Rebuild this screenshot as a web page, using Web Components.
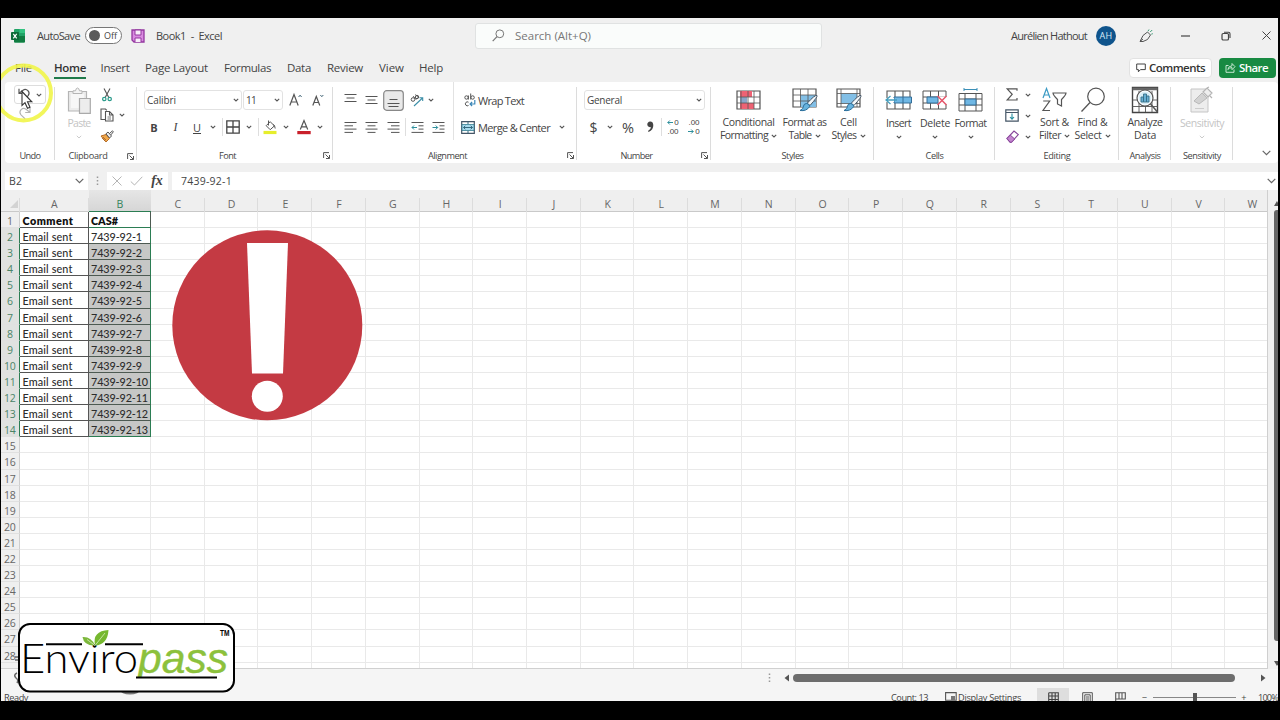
<!DOCTYPE html>
<html lang="en">
<head>
<meta charset="utf-8">
<title>Book1 - Excel</title>
<style>
html, body { margin: 0; height: 100%; background: #000; overflow: hidden; }
body { font-family: "Open Sans", "Noto Sans", sans-serif; font-size: 11px; color: #444; }
</style>
</head>
<body>
<xl-window>
    <xl-titlebar></xl-titlebar>
    <xl-tabs></xl-tabs>
    <xl-ribbon></xl-ribbon>
    <xl-formula></xl-formula>
    <xl-sheet></xl-sheet>
    <xl-footer></xl-footer>
</xl-window>
<alert-mark></alert-mark>
<brand-badge></brand-badge>
<click-ring></click-ring>

<script>
const ICONS = {
    chev: [6, 4, `<path d="M.8.8 3 3 5.2.8" fill="none" stroke="#555" stroke-width="1.1"/>`],
    bigchev: [9, 6, `<path d="M.7.9 4.5 4.7 8.3.9" fill="none" stroke="#666" stroke-width="1.2"/>`],
    palechev: [6, 4, `<path d="M.8.8 3 3 5.2.8" fill="none" stroke="#ccc"/>`],
    sep: [1, 18, `<path d="M.5 0v18" stroke="#dedede"/>`],
    excel: [14, 14, `<rect x="3" width="11" height="13.500" rx="1" fill="#21a366"/><path d="M8.500 0H13a1 1 0 0 1 1 1v3H8.500z" fill="#33c481"/><path d="M3 7h11v5.500a1 1 0 0 1-1 1H4a1 1 0 0 1-1-1z" fill="#107c41"/><rect y="3" width="8" height="8" rx=".8" fill="#0c6b38"/><path d="m2.300 4.800 3.400 4.500m0-4.500L2.300 9.300" stroke="#fff" stroke-width="1.200"/>`],
    save: [14, 14, `<path d="M1 1h12v12H3l-2-2z" fill="#d98ae0" stroke="#93379f" stroke-width="1.300"/><path d="M4 1h6v5H4z" fill="#f8edf9" stroke="#93379f"/><path d="M4 13V9h6v4" fill="#f8edf9" stroke="#93379f"/>`],
    search: [13, 13, `<circle cx="7.800" cy="4.800" r="3.900" fill="none" stroke="#777"/><path d="m5 7.600-4.300 4.600" stroke="#777" stroke-width="1.200"/>`],
    pen: [14, 14, `<path d="M1 12.500 4 6.500 8.500 3l3 3-3 4.500-4.500 2zL4 10M1 12.500l3 0" fill="none" stroke="#555"/><path d="m9 2.200 1-1.700M11.200 3l2-2M12.300 5.200l1.500-.5" stroke="#3a9c76"/>`],
    min: [9, 2, `<path d="M0 1h9" stroke="#444" stroke-width="1.200"/>`],
    max: [10, 10, `<rect x="1" y="2.500" width="6.500" height="6.500" rx="1.300" fill="none" stroke="#444" stroke-width="1.200"/><path d="M3 1.200h4.500q1.500 0 1.500 1.500V7" fill="none" stroke="#444" stroke-width="1.100"/>`],
    close: [9, 9, `<path d="m.5.5 8 8m0-8-8 8" stroke="#444"/>`],
    comment: [10, 10, `<path d="M.7 1h8.600v5.600H4.500L2.400 8.800V6.600H.7z" fill="none" stroke="#444"/>`],
    share: [11, 11, `<path d="M3.500 3.500H1v6.800h8V7.500M2.800 7.500q.5-3.500 4.200-3.700V1.500l3 3.200-3 3V5.600q-2.700 0-4.200 1.900" fill="none" stroke="#d7f0df" stroke-width=".9"/>`],
    undo: [13, 13, `<path d="M1 .8v4.700h4.800M1.200 5.300 5 2.200a3.800 3.800 0 0 1 5.200 5.400L5.800 12" fill="none" stroke="#555" stroke-width="1.200"/>`],
    redo: [13, 13, `<path d="M12 .8v4.700H7.200M11.800 5.300 8 2.200a3.800 3.800 0 0 0-5.200 5.400L7.200 12" fill="none" stroke="#b2b2b2" stroke-width="1.100"/>`],
    paste: [24, 27, `<path d="M1.500 4.500h18V24h-18z" fill="#ececec" stroke="#b5b5b5" stroke-width="1.200"/><path d="M4 7h13v14H4z" fill="#f7f7f7"/><path d="M6 6.500V3.800h2.500Q9 1 10.500 1t2 2.800H15v2.700z" fill="#f4f4f4" stroke="#b5b5b5"/><path d="M12.500 11.500h10.800v14.800H12.500z" fill="#ededed" stroke="#aaa" stroke-width="1.200"/>`],
    cut: [10, 14, `<path d="m2 .5 4.800 9M8 .5 3.200 9.500" stroke="#555" stroke-width="1.100"/><circle cx="2.300" cy="11" r="1.700" fill="none" stroke="#2b9b8b" stroke-width="1.200"/><circle cx="7.700" cy="11" r="1.700" fill="none" stroke="#2b9b8b" stroke-width="1.200"/>`],
    copy: [14, 14, `<path d="M5 11.500H1V1h4.500l1.300 1.300" fill="none" stroke="#555" stroke-width="1.100"/><path d="M5.500 3.500h4l3.500 3.500v6H5.500zM9.500 3.500V7H13" fill="#fff" stroke="#555" stroke-width="1.100"/><path d="M7.500 9h3.500M7.500 11h3.500" stroke="#555" stroke-width=".8"/>`],
    brush: [14, 13, `<path d="m1 6 5-1.500 3.500 4L6 12z" fill="#f0a94c" stroke="#b76c25"/><path d="M6 3.800 8 2l3.500 4-2 2z" fill="#eee" stroke="#555"/><path d="M9.500 3.500 12.500.8l.8 1L11 4.800" fill="none" stroke="#555"/><path d="m3 7 3 3M2 8l3 3" stroke="#9b571c" stroke-width=".7"/>`],
    launch: [7, 7, `<path d="M.6 6V.6H6M6.500 3v3.500H3M2.500 2.500l3.800 3.800" fill="none" stroke="#555"/>`],
    grow: [13, 14, `<path d="m.8 12.500 4.200-11 4.200 11M2.200 9h5.600" fill="none" stroke="#555" stroke-width="1.200"/><path d="m9.600 4 1.500-1.800L12.600 4" fill="none" stroke="#467"/>`],
    shrink: [12, 14, `<path d="m.8 12.500 3.500-9 3.500 9M2 9.500h4.700" fill="none" stroke="#555" stroke-width="1.200"/><path d="m8.400 2 1.400 1.700L11.300 2" fill="none" stroke="#467"/>`],
    borders: [14, 14, `<path d="M.8.800h12.400v12.400H.8zM7 1v12M1 7h12" fill="none" stroke="#444" stroke-width="1.300"/>`],
    fill: [14, 15, `<path d="m3.200 5.700 4-4 4.200 4.200-4.200 3.800z" fill="#fff" stroke="#555"/><path d="M5.500.5v5M10 4.500q2 .5 2.200 4" fill="none" stroke="#555"/><path d="M.5 12.500h13" stroke="#e6ee2c" stroke-width="3.200"/>`],
    fontcol: [14, 15, `<path d="m3.300 9.500 3.700-9 3.700 9M4.500 6.800h5" fill="none" stroke="#555" stroke-width="1.200"/><path d="M.3 12.600h13.400" stroke="#c9202b" stroke-width="3.200"/>`],
    atop: [13, 14, `<path d="M.5 1.500h12M2.500 5h8M.5 8.500h12" stroke="#555"/>`],
    amid: [13, 14, `<path d="M.5 3.500h12M2.500 7h8M.5 10.500h12" stroke="#555"/>`],
    abot: [21, 21, `<rect x=".7" y=".7" width="19.600" height="19.600" rx="3" fill="#e9e9e9" stroke="#888" stroke-width="1.200"/><path d="M6.500 9.500h8M4.500 13.500h12M5.500 16.500h10" stroke="#555"/>`],
    left: [13, 13, `<path d="M.5 1.500h12M.5 4.800h8.500M.5 8.100h12M.5 11.400h8.500" stroke="#555"/>`],
    center: [13, 13, `<path d="M.5 1.500h12M2.500 4.800h8M.5 8.100h12M2.500 11.400h8" stroke="#555"/>`],
    right: [13, 13, `<path d="M.5 1.500h12M4 4.800h8.500M.5 8.100h12M4 11.400h8.500" stroke="#555"/>`],
    outdent: [13, 13, `<path d="M.5 1.500h12M7.500 4.800h5M7.500 8.100h5M.5 11.400h12" stroke="#555"/><path d="M6 6.500H1M3 4.500l-2 2 2 2" fill="none" stroke="#2e8f9c"/>`],
    indent: [13, 13, `<path d="M.5 1.500h12M7.500 4.800h5M7.500 8.100h5M.5 11.400h12" stroke="#555"/><path d="M.5 6.500h5.200m-2-2 2 2-2 2" fill="none" stroke="#2e8f9c"/>`],
    orient: [14, 13, `<g fill="none" stroke="#555"><circle cx="3" cy="5.500" r="1.800"/><path d="m3.200 2.200 3 3.500"/><circle cx="7" cy="3" r="1.700"/><path d="M5.500.5 8.500 4"/></g><path d="M4 12 12.500 4M9.500 3.700h3.200v3.200" fill="none" stroke="#3d8fa8" stroke-width="1.100"/>`],
    wrap: [12, 14, `<g fill="none" stroke="#555"><circle cx="2.500" cy="4.500" r="1.700"/><path d="M4.400 2.500v4M6.700.5v6"/><circle cx="8.600" cy="4.500" r="1.700"/><path d="M4.500 9.200a2 2 0 1 0 0 3.300"/></g><path d="M10.800 7v4H6.300m1.800-2-2 2 2 2" fill="none" stroke="#3b87b8" stroke-width="1.200"/>`],
    merge: [14, 13, `<path d="M.7.7h12.600v11.600H.7z" fill="#fff" stroke="#456" stroke-width="1.200"/><path d="M1 3.500h12v6H1z" fill="#a7daed" stroke="#357d92" stroke-width=".8"/><path d="M7 .7v2.500M7 9.800v2.500M2.500 6.500h9M4.300 4.800 2.500 6.500l1.800 1.700M9.700 4.800l1.800 1.700-1.800 1.700" fill="none" stroke="#34697e"/>`],
    comma: [7, 12, `<path d="M3.300.6a2.800 2.800 0 1 0 .8 5.400Q3.700 8.700 1 9.900l.6 1.100Q6.500 9 6.300 4 6 .6 3.300.6" fill="#444"/>`],
    arrl: [6, 5, `<path d="M6 2.500H.8M2.800.5l-2 2 2 2" fill="none" stroke="#2e8f9c"/>`],
    arrr: [6, 5, `<path d="M0 2.500h5.200M3.200.5l2 2-2 2" fill="none" stroke="#2e8f9c"/>`],
    cond: [25, 20, `<path d="M1 1h23v18H1z" fill="#fff" stroke="#555" stroke-width="1.200"/><path d="M4 1h12v6H4zM4 13h14v6H4z" fill="#ee6274"/><path d="M4 7h7v6H4z" fill="#8ba5c9"/><path d="M1 7h23M1 13h23M5 1v18M12 1v18M18 1v18" fill="none" stroke="#555" stroke-width=".8"/>`],
    fmttable: [26, 23, `<path d="M1 1h23v18H1z" fill="#fff" stroke="#555" stroke-width="1.200"/><path d="M8.500 7H24v12H8.500z" fill="#82bfe6"/><path d="M1 7h23M1 13h23M8.500 1v18M16 1v18" stroke="#555" stroke-width=".8"/><path d="M25 7.500q1 1-7 10l-3-2Q23 6.500 25 7.500" fill="#f4f7f9" stroke="#456"/><path d="M14.500 15.500q3 0 3.200 3Q14.500 23.500 8 22.500q3.500-1.500 3.500-4.500.500-2.500 3-2.500" fill="#67b3de" stroke="#2b6f9c"/>`],
    cellstyle: [26, 23, `<path d="M1 1h23v18H1z" fill="#fff" stroke="#555" stroke-width="1.200"/><path d="M5 5.500h16v10H5z" fill="#82bfe6"/><path d="M5 1v18M21 1v18M1 5.500h23M1 15.500h23" stroke="#555" stroke-width=".8"/><path d="M25 7.500q1 1-7 10l-3-2Q23 6.500 25 7.500" fill="#f4f7f9" stroke="#456"/><path d="M14.500 15.500q3 0 3.200 3Q14.500 23.500 8 22.500q3.500-1.500 3.500-4.500.500-2.500 3-2.500" fill="#67b3de" stroke="#2b6f9c"/>`],
    insert: [27, 20, `<path d="M2 1h23v18H2zM10 1v18M18 1v18" fill="#fff" stroke="#555" stroke-width="1.100"/><path d="M9 7h17.500v6H9z" fill="#6fb7e4" stroke="#356f99"/><path d="M18 7v6" stroke="#356f99"/><path d="M0 8h9v4H0z" fill="#fff"/><path d="M12 10H1m4.500-4L1 10l4.500 4" fill="none" stroke="#469fbe" stroke-width="1.300"/>`],
    del: [26, 20, `<path d="M1 1h23v18H1zM1 7h23M1 13h23M8.500 1v18M16.500 1v18" fill="#fff" stroke="#555" stroke-width="1"/><path d="M5 7h11v6H5z" fill="#6fb7e4" stroke="#356f99"/><path d="M16.500 6.500h9v8h-9z" fill="#fff"/><path d="m15.500 6 9 9m0-9-9 9" stroke="#e6576b" stroke-width="1.500"/>`],
    format: [25, 24, `<path d="M1 5.500h23V23H1zM1 11h23M1 17h23M7 5.500V23M18 5.500V23" fill="#fff" stroke="#555" stroke-width="1"/><path d="M7 11h11v6H7z" fill="#6fb7e4" stroke="#356f99"/><path d="M6 1.500h13M6 0v3M19 0v3" stroke="#3a8fb7"/>`],
    sum: [12, 13, `<path d="M11 2.800V.8H1.200l5 5.500-5 5.700H11v-2" fill="none" stroke="#555" stroke-width="1.200"/>`],
    filldown: [14, 13, `<path d="M.8.800h12.400v11.400H.8zM1 3.500h12" fill="#fff" stroke="#456" stroke-width="1.200"/><path d="M7 4.500V10m-2-2 2 2.200L9 8" fill="none" stroke="#278fa0" stroke-width="1.100"/>`],
    eraser: [13, 13, `<path d="M1 8.500 8 1l4.300 3.500-6.800 7.700H4z" fill="#fff" stroke="#87459a" stroke-width="1.100"/><path d="m1 8.500 3.300-3.400L8.700 9l-3.200 3.200H4z" fill="#c486cf" stroke="#87459a"/>`],
    sort: [25, 25, `<path d="M1 11 4.500 1.500 8 11M2.200 8h4.600" fill="none" stroke="#3c9bc4" stroke-width="1.200"/><path d="M1.200 14h6.500L1 23.500h7" fill="none" stroke="#555" stroke-width="1.200"/><path d="M11 6h13q0 2-4.500 6.500V19l-4-2v-4.500Q11 8 11 6z" fill="none" stroke="#555" stroke-width="1.200"/>`],
    find: [26, 26, `<circle cx="16" cy="9.500" r="8.300" fill="#fff" stroke="#555" stroke-width="1.200"/><path d="M10 15.500 1.500 24.500" stroke="#555" stroke-width="1.300"/>`],
    analyze: [28, 28, `<path d="M1.500 1.500h25v25h-25z" fill="#fff" stroke="#444" stroke-width="1.400"/><path d="M1.500 3h25" stroke="#666" stroke-width="2.500"/><path d="M1.500 14h25M1.500 20.500h25M8 5v21M14.500 5v21M21 5v21" stroke="#555" stroke-width=".9"/><circle cx="14" cy="12" r="8" fill="#fff" stroke="#555" stroke-width="1.200"/><circle cx="14" cy="12" r="6.500" fill="#d9eef7"/><path d="M10 11h2.500v5H10zM12.500 8h3v8h-3zM15.500 10H18v6h-2.500z" fill="#67afd3" stroke="#356f88" stroke-width=".9"/><path d="m19.500 18 7 8" stroke="#555" stroke-width="1.500"/>`],
    sens: [24, 27, `<path d="M1 2h17v23H1z" fill="#ededed" stroke="#c5c5c5"/><path d="m4 14 8-8 5 5-8 6z" fill="#d2d2d2" stroke="#b9b9b9"/><path d="m13 5 4-4 5 5-4 4zM20 9l2 2M17 1l2-1" fill="#eee" stroke="#b5b5b5" stroke-width="1.200"/><path d="M5 21.500h9" stroke="#ccc"/>`],
    cancel: [10, 10, `<path d="m.5.5 9 9m0-9-9 9" stroke="#b5b5b5"/>`],
    ok: [13, 10, `<path d="M.8 5.500 4.500 9 12.300.8" fill="none" stroke="#b5b5b5"/>`],
    dots: [3, 11, `<path d="M1.500.5v10" stroke="#999" stroke-width="1.500" stroke-dasharray="1.500 2"/>`],
    tril: [5, 8, `<path d="M5 .5v7L.5 4z" fill="#555"/>`],
    trir: [5, 8, `<path d="M0 .5v7L4.500 4z" fill="#555"/>`],
    display: [12, 10, `<path d="M.6.6h10.600v7.600H.6zM2 9.500h4" fill="none" stroke="#555" stroke-width="1.100"/><path d="M6 4h4v4H6z" fill="#777"/>`],
    vnormal: [11, 11, `<path d="M.7.700h9.600V11M.7.700V11M.7 4h9.600M.7 7.500h9.600M4 .7V11M7.200.700V11" fill="none" stroke="#444" stroke-width="1.100"/>`],
    vpage: [11, 11, `<path d="M.7 11V.7h9.600V11M2.800 11V2.800h5.400V11M4 5h3M4 7h3M4 9h3" fill="none" stroke="#555"/>`],
    vbreak: [11, 11, `<path d="M.7 11V.7h9.600V7H.7M4 1v6M7 1v6" fill="none" stroke="#555" stroke-width="1.100"/>`]
};

// every part shares the same set-up: its own style, its markup, an optional fixed width
class Part extends HTMLElement {
    static css = "";
    static html = "<slot></slot>";

    constructor() {
        super();
        this.attachShadow({ mode: "open" });
    }

    connectedCallback() {
        if(this.hasAttribute("w")) {
            this.style.width = `${this.getAttribute("w")}px`;
        }
        this.shadowRoot.innerHTML = `<style>${this.constructor.css}</style>${this.render()}`;
        this.ready();
    }

    render() {
        return this.constructor.html;
    }

    ready() {}
}

class UiIcon extends Part {
    static css = `:host { display: flex; flex: none; align-items: center; justify-content: center; }
        svg { flex: none; display: block; overflow: visible; }`;

    render() {
        const [w, h, body] = ICONS[this.getAttribute("name")];
        return `<svg width="${w}" height="${h}" viewBox="0 0 ${w} ${h}">${body}</svg>`;
    }
}

// text whose tracking is adjusted so that it comes out "fit" pixels wide
class UiText extends Part {
    static css = `:host { display: flex; flex: none; align-items: center; justify-content: center; white-space: nowrap; line-height: 13px; }
        :host([start]) { justify-content: flex-start; }`;
    static html = `<span><slot></slot></span>`;

    ready() {
        const fit = +this.getAttribute("fit");
        if(!fit) return;
        const span = this.shadowRoot.querySelector("span");
        const natural = span.getBoundingClientRect().width;
        span.style.letterSpacing = `${(fit - natural) / this.textContent.length}px`;
    }
}

class UiRow extends Part {
    static css = `:host { display: flex; flex: none; align-items: center; }`;
}

class UiCol extends Part {
    static css = `:host { display: flex; flex: none; flex-direction: column; }`;
}

class UiCombo extends Part {
    static css = `:host { display: flex; flex: none; box-sizing: border-box; height: 20px; align-items: center; justify-content: space-between; padding: 0 2px; border: 1px solid #e2e2e2; border-radius: 3px; background: #fff; }`;
    static html = `<slot></slot><ui-icon name="chev"></ui-icon>`;
}

class RbBig extends Part {
    static css = `:host { display: flex; flex: none; flex-direction: column; align-items: center; height: 66px; font-size: 10.5px; }
        .pic { height: 34px; padding-top: 1px; }
        .pic.two { height: 33px; }
        :host([disabled]) { color: #c4c4c4; }
        .last { height: 13px; gap: 3px; }`;

    render() {
        const [a, fa, b, fb] = this.getAttribute("lines").split("|");
        const chev = this.hasAttribute("disabled") ? "palechev" : "chev";
        const menu = this.hasAttribute("plain") ? "" : `<ui-icon name="${chev}"></ui-icon>`;
        return `<ui-icon class="pic ${b ? "two" : ""}" name="${this.getAttribute("icon")}"></ui-icon>
            <ui-text fit="${fa}" style="height:13px">${a}</ui-text>
            <ui-row class="last">${b ? `<ui-text fit="${fb}">${b}</ui-text>` : ""}${menu}</ui-row>`;
    }
}

class RbGroup extends Part {
    static css = `:host { display: flex; flex: none; flex-direction: column; box-sizing: border-box; height: 81px; background: linear-gradient(#dcdcdc, #dcdcdc) right 5px / 1px 73px no-repeat; }
        .body { display: flex; height: 66px; }
        .foot { display: flex; height: 16px; align-items: center; font-size: 9.2px; }
        .foot ui-text { flex: 1; }
        .foot ui-icon { padding: 1px 3px 0 5px; }`;

    render() {
        const launch = this.hasAttribute("launch") ? `<ui-icon name="launch"></ui-icon>` : "";
        return `<div class="body"><slot></slot></div>
            <div class="foot"><ui-text fit="${this.getAttribute("fit")}">${this.getAttribute("label")}</ui-text>${launch}</div>`;
    }
}

class XlWindow extends Part {
    static css = `:host { display: flex; flex-direction: column; width: 1277px; height: 683px; margin: 18px 0 0 1px; background: #f0f0f0; overflow: hidden; }`;
}

class XlTitlebar extends Part {
    static css = `:host { display: flex; height: 35px; flex: none; align-items: center; }
        .switch { display: flex; box-sizing: border-box; width: 37px; height: 17px; margin-left: 5px; padding-left: 3px; align-items: center; gap: 4px; border: 1px solid #777; border-radius: 9px; background: #fff; font-size: 9px; }
        .switch i { width: 11px; height: 11px; border-radius: 50%; background: #5b5b5b; }
        .search { display: flex; box-sizing: border-box; width: 347px; height: 26px; margin-left: 252px; align-items: center; border: 1px solid #e0e2e2; border-radius: 3px; background: #fafcfb; color: #777; }
        .avatar { width: 20px; height: 20px; margin-left: 9px; border-radius: 50%; background: #0f548c; color: #d9eaf7; font-size: 9px; }`;
    static html = `<ui-icon name="excel" w="33"></ui-icon>
        <ui-text start fit="43" w="43" style="margin-left:3px">AutoSave</ui-text>
        <span class="switch"><i></i><ui-text fit="13">Off</ui-text></span>
        <ui-icon name="save" w="32"></ui-icon>
        <ui-text start w="69" fit="66" style="margin-left:2px">Book1&nbsp; -&nbsp; Excel</ui-text>
        <span class="search" style="margin-left:250px"><ui-icon name="search" w="39" style="margin-left:3px"></ui-icon><ui-text start fit="76" style="font-size:11.5px;margin-left:-3px">Search (Alt+Q)</ui-text></span>
        <ui-text start w="76" fit="76" style="margin-left:189px">Aurélien Hathout</ui-text>
        <ui-text class="avatar" fit="13">AH</ui-text>
        <ui-icon name="pen" w="60"></ui-icon>
        <ui-icon name="min" w="19"></ui-icon>
        <ui-icon name="max" w="61"></ui-icon>
        <ui-icon name="close" w="20"></ui-icon>`;
}

class XlTabs extends Part {
    static css = `:host { display: flex; height: 29px; flex: none; align-items: center; padding-left: 14px; font-size: 11.5px; }
        ui-text { height: 22px; }
        .on { font-weight: 600; color: #333; background: linear-gradient(#1f7a4a, #1f7a4a) bottom / 100% 2px no-repeat; }
        .btn { display: flex; box-sizing: border-box; height: 20px; align-items: center; border-radius: 4px; font-weight: 600; }
        .comments { width: 83px; margin-left: auto; padding-left: 6px; gap: 3px; border: 1px solid #e2e2e2; background: #fff; color: #333; }
        .share { width: 57px; margin: 0 2px 0 7px; padding-left: 6px; gap: 3px; background: #188a42; color: #fff; }`;

    render() {
        const tabs = [["File", 17, 0], ["Home", 32, 22], ["Insert", 29, 14.5], ["Page Layout", 63, 15.5], ["Formulas", 47, 16],
            ["Data", 24, 16], ["Review", 36, 16], ["View", 25, 16], ["Help", 24, 15]];
        return tabs.map(([t, w, gap]) =>
            `<ui-text class="${t === "Home" ? "on" : ""}" w="${w}" fit="${w}" start style="margin-left:${gap}px">${t}</ui-text>`).join("")
            + `<span class="btn comments"><ui-icon name="comment"></ui-icon><ui-text fit="56">Comments</ui-text></span>
            <span class="btn share"><ui-icon name="share"></ui-icon><ui-text fit="29">Share</ui-text></span>`;
    }
}

class XlRibbon extends Part {
    static css = `:host { display: flex; flex: none; height: 81px; margin-left: 4px; background: #fff; border-radius: 4px; }
        .r1 { height: 36px; }
        .r2 { height: 18px; }
        .undo { width: 32px; height: 19px; margin: 3px 0 3px 9px; border: 1px solid #ddd; border-radius: 3px; box-sizing: border-box; }
        .num { display: flex; flex: none; flex-direction: column; align-items: center; font: 8px/9px "Liberation Sans", sans-serif; color: #444; }
        .num span { display: flex; gap: 1px; }
        .collapse { margin: 66px 0 0 29px; }`;
    static html = `
        <rb-group w="50" label="Undo" fit="21">
            <ui-col>
                <ui-row class="undo"><ui-icon name="undo" w="18"></ui-icon><ui-icon name="chev" w="12"></ui-icon></ui-row>
                <ui-icon name="redo" w="38"></ui-icon>
            </ui-col>
        </rb-group>
        <rb-group w="83" label="Clipboard" fit="39" launch style="margin-left:-1px">
            <rb-big w="50" icon="paste" lines="Paste|23" disabled></rb-big>
            <ui-col style="padding-top:3px">
                <ui-icon name="cut" w="5" style="height:20px"></ui-icon>
                <ui-row style="height:20px"><ui-icon name="copy" w="5"></ui-icon><ui-icon name="chev" w="26"></ui-icon></ui-row>
                <ui-icon name="brush" w="5" style="height:22px"></ui-icon>
            </ui-col>
        </rb-group>
        <rb-group w="196" label="Font" fit="17" launch>
            <ui-col style="padding-left:7px">
                <ui-row class="r1">
                    <ui-combo w="98"><ui-text fit="29" style="font-size:10px">Calibri</ui-text></ui-combo>
                    <ui-combo w="40" style="margin-left:1px"><ui-text fit="10" style="font-size:10px">11</ui-text></ui-combo>
                    <ui-icon name="grow" w="25"></ui-icon><ui-icon name="shrink" w="19"></ui-icon>
                </ui-row>
                <ui-row class="r2">
                    <ui-text w="20" style="font-weight:700">B</ui-text>
                    <ui-text w="23" style="font:italic 12px 'Liberation Serif',serif">I</ui-text>
                    <ui-text w="20" style="text-decoration:underline">U</ui-text><ui-icon name="chev" w="12"></ui-icon>
                    <ui-icon name="sep" w="6"></ui-icon><ui-icon name="borders" w="16"></ui-icon><ui-icon name="chev" w="16"></ui-icon>
                    <ui-icon name="sep" w="2"></ui-icon><ui-icon name="fill" w="22"></ui-icon><ui-icon name="chev" w="9"></ui-icon>
                    <ui-icon name="fontcol" w="27"></ui-icon><ui-icon name="chev" w="5"></ui-icon>
                </ui-row>
            </ui-col>
        </rb-group>
        <rb-group w="244" label="Alignment" fit="39" launch>
            <ui-col style="padding-left:7px;width:113px">
                <ui-row class="r1">
                    <ui-icon name="atop" w="21"></ui-icon><ui-icon name="amid" w="21"></ui-icon><ui-icon name="abot" w="23"></ui-icon>
                    <ui-icon name="orient" w="24"></ui-icon><ui-icon name="chev" w="4"></ui-icon>
                </ui-row>
                <ui-row class="r2">
                    <ui-icon name="left" w="21"></ui-icon><ui-icon name="center" w="21"></ui-icon><ui-icon name="right" w="23"></ui-icon>
                    <ui-icon name="sep" w="1"></ui-icon><ui-icon name="outdent" w="22"></ui-icon><ui-icon name="indent" w="21"></ui-icon>
                </ui-row>
            </ui-col>
            <ui-col style="border-left:1px solid #e2e2e2;padding-left:7px;height:58px">
                <ui-row class="r1"><ui-icon name="wrap" w="17"></ui-icon><ui-text fit="46">Wrap Text</ui-text></ui-row>
                <ui-row class="r2"><ui-icon name="merge" w="14"></ui-icon><ui-text fit="72" style="margin-left:3px">Merge &amp; Center</ui-text><ui-icon name="chev" w="24"></ui-icon></ui-row>
            </ui-col>
        </rb-group>
        <rb-group w="134" label="Number" fit="32" launch>
            <ui-col style="padding-left:7px">
                <ui-row class="r1"><ui-combo w="121"><ui-text fit="35" style="font-size:10px">General</ui-text></ui-combo></ui-row>
                <ui-row class="r2">
                    <ui-text w="19" style="font-size:14px">$</ui-text><ui-icon name="chev" w="13"></ui-icon>
                    <ui-text w="24" style="font-size:14.5px">%</ui-text><ui-icon name="comma" w="20"></ui-icon><ui-icon name="sep" w="2"></ui-icon>
                    <div class="num" style="width:22px"><span><ui-icon name="arrl"></ui-icon>0</span><span>.00</span></div>
                    <div class="num" style="width:20px"><span>.00</span><span><ui-icon name="arrr"></ui-icon>0</span></div>
                </ui-row>
            </ui-col>
        </rb-group>
        <rb-group w="163" label="Styles" fit="22">
            <rb-big w="75" icon="cond" lines="Conditional|52|Formatting|48"></rb-big>
            <rb-big w="37" icon="fmttable" lines="Format as|44|Table|23"></rb-big>
            <rb-big w="51" icon="cellstyle" lines="Cell|17|Styles|25"></rb-big>
        </rb-group>
        <rb-group w="121" label="Cells" fit="18">
            <rb-big w="49" icon="insert" lines="Insert|25"></rb-big>
            <rb-big w="24" icon="del" lines="Delete|30"></rb-big>
            <rb-big w="47" icon="format" lines="Format|32"></rb-big>
        </rb-group>
        <rb-group w="124" label="Editing" fit="27">
            <ui-col style="padding:2px 8px 0 3px">
                <ui-row style="height:21px"><ui-icon name="sum" w="28"></ui-icon><ui-icon name="chev" w="3"></ui-icon></ui-row>
                <ui-row style="height:21px"><ui-icon name="filldown" w="28"></ui-icon><ui-icon name="chev" w="3"></ui-icon></ui-row>
                <ui-row style="height:21px"><ui-icon name="eraser" w="28"></ui-icon><ui-icon name="chev" w="3"></ui-icon></ui-row>
            </ui-col>
            <rb-big w="35" icon="sort" lines="Sort &amp;|29|Filter|22"></rb-big>
            <rb-big w="41" icon="find" lines="Find &amp;|30|Select|27"></rb-big>
        </rb-group>
        <rb-group w="52" label="Analysis" fit="31">
            <rb-big w="52" icon="analyze" lines="Analyze|35|Data|22" plain></rb-big>
        </rb-group>
        <rb-group w="62" label="Sensitivity" fit="38">
            <rb-big w="62" icon="sens" lines="Sensitivity|44" disabled></rb-big>
        </rb-group>
        <ui-icon class="collapse" name="bigchev" style="height:9px"></ui-icon>`;
}

class XlFormula extends Part {
    static css = `:host { display: flex; flex: none; height: 18px; padding: 9px 0 0 4px; font-size: 10.5px; }
        .box { display: flex; box-sizing: border-box; align-items: center; background: #fff; }
        .name { width: 83px; padding: 0 4px; justify-content: space-between; }
        .tools { width: 61px; }
        .value { flex: 1; margin-left: 4px; padding: 0 2px 0 9px; justify-content: space-between; }
        .fx { font: italic 600 14px "Liberation Serif", serif; }`;
    static html = `<span class="box name"><ui-text fit="13">B2</ui-text><ui-icon name="bigchev"></ui-icon></span>
        <ui-icon name="dots" w="19"></ui-icon>
        <span class="box tools"><ui-icon name="cancel" w="19"></ui-icon><ui-icon name="ok" w="21"></ui-icon><ui-text class="fx" w="20">fx</ui-text></span>
        <span class="box value"><ui-text fit="51">7439-92-1</ui-text><ui-icon name="bigchev"></ui-icon></span>`;
}

class XlSheet extends Part {
    static css = `:host { display: flex; flex: none; height: 479px; overflow: hidden; }
        .table { width: 1267px; overflow: hidden; border-right: 1px solid #cfcfcf; box-sizing: border-box; background: #fff; border-bottom: 1px solid #d0d0d0; }
        .row { display: grid; grid-template-columns: 18.5px 69.5px 62px repeat(21, 53.72px); grid-template-rows: 100%; height: 16.1px; font: 500 10.8px/15px Lato, sans-serif; color: #2c2c2c; }
        .row > * { box-sizing: border-box; height: 100%; border-right: 1px solid #e9e9e9; border-bottom: 1px solid #e9e9e9; white-space: nowrap; }
        .head { height: 22px; background: #efefef; box-shadow: inset 0 -1px #c9c9c9; font: 10.5px/15px "Open Sans", sans-serif; color: #666; }
        .head > * { border: 0; padding-top: 7px; text-align: center; background: linear-gradient(#dcdcdc, #dcdcdc) right bottom / 1px 14px no-repeat; }
        .head > .on { background: linear-gradient(#e6e6e6, #d6d6d6); color: #35845b; border-bottom: 1px solid #2b7d53; }
        .head > .corner { display: flex; justify-content: flex-end; align-items: flex-end; padding: 0 2px 4px 0; }
        .corner i { border: 4px solid transparent; border-right-color: #d3d3d3; border-bottom-color: #d3d3d3; }
        .row > .n { background: #efefef; text-align: center; font: 10.5px/18px "Open Sans", sans-serif; letter-spacing: -.3px; color: #666; border-bottom-color: #e0e0e0; border-right-color: #cfcfcf; }
        .row > .n.on { background: #e0e2e0; color: #4b8467; border-right: 1px solid #2b7d53; }
        .row > .a { border-color: #555; padding: 2px 0 0 3px; }
        .row > .b { border-color: #4d5a52; padding: 2px 0 0 2px; }
        .row > .hd { font-weight: 800; color: #111; }
        .row > .pick { background: #c6c7c6; }
        .row > .b.in { border-right: 1px solid #2b7d53; }
        .row > .edge { border-bottom-color: #2b7d53; }
        .bar { display: flex; flex: 1; flex-direction: column; align-items: flex-end; padding-top: 11px; }
        .bar i { border: 3px solid transparent; border-bottom: 5px solid #555; border-top: 0; margin-right: -2px; }
        .bar b { width: 4px; height: 431px; margin: 4px 0 20px; border-radius: 3px 0 0 3px; background: #666; }
        .bar i + b + i { border: 3px solid transparent; border-top: 5px solid #555; border-bottom: 0; }`;

    render() {
        const cols = "ABCDEFGHIJKLMNOPQRSTUVW".split("");
        let out = `<div class="row head"><span class="corner"><i></i></span>${cols.map(c => `<span class="${c === "B" ? "on" : ""}">${c}</span>`).join("")}</div>`;
        for(let r = 1; r <= 29; r++) {
            const used = r >= 2 && r <= 14;
            let a = "<span></span>", b = "<span></span>";
            if(r === 1) {
                a = `<span class="a hd"><ui-text start fit="51">Comment</ui-text></span>`;
                b = `<span class="b hd edge"><ui-text start fit="27">CAS#</ui-text></span>`;
            }
            else if(used) {
                const width = r > 10 ? 57 : 51;
                a = `<span class="a"><ui-text start fit="50">Email sent</ui-text></span>`;
                b = `<span class="b in ${r > 2 ? "pick" : ""} ${r === 14 ? "edge" : ""}"><ui-text start fit="${width}">7439-92-${r - 1}</ui-text></span>`;
            }
            out += `<div class="row"><span class="n ${used ? "on" : ""}">${r}</span>${a}${b}${"<span></span>".repeat(21)}</div>`;
        }
        return `<div class="table">${out}</div><div class="bar"><i></i><b></b><i></i></div>`;
    }
}

class XlFooter extends Part {
    static css = `:host { display: flex; flex: 1; flex-direction: column; background: #f5f5f5; overflow: hidden; font-size: 9.2px; }
        .scroll { display: flex; flex: none; height: 18px; align-items: center; padding-left: 766px; }
        .scroll b { width: 442px; height: 8px; margin: 0 26px 0 4px; border-radius: 4px; background: #6d6d6d; }
        .status { display: flex; flex: none; height: 18px; align-items: center; padding: 2px 0 0 3px; box-sizing: border-box; }
        .sel { height: 18px; background: #dedede; }
        .zoom { width: 84px; height: 8px; margin: 0 4px; background: linear-gradient(#555, #555) 50% / 4px 8px no-repeat, linear-gradient(#888, #888) 50% / 100% 1px no-repeat; }`;
    static html = `<div class="scroll"><ui-icon name="dots" w="5"></ui-icon><ui-icon name="tril" style="margin-left:12px"></ui-icon><b></b><ui-icon name="trir"></ui-icon></div>
        <div class="status"><ui-text start w="24" fit="24">Ready</ui-text>
            <ui-text fit="37" style="margin-left:863px">Count: 13</ui-text>
            <ui-icon name="display" style="margin-left:17px"></ui-icon><ui-text fit="63" style="margin-left:1px">Display Settings</ui-text>
            <ui-icon name="vnormal" class="sel" w="32" style="margin-left:16px"></ui-icon>
            <ui-icon name="vpage" w="36"></ui-icon><ui-icon name="vbreak" w="31"></ui-icon>
            <ui-text w="9" style="margin-left:4px">−</ui-text><span class="zoom"></span><ui-text w="8">+</ui-text>
            <ui-text start w="20" fit="20" style="margin-left:10px">100%</ui-text></div>`;
}

class AlertMark extends Part {
    static css = `:host { position: absolute; left: 172px; top: 230px; } svg { display: block; }`;
    static html = `<svg width="191" height="191"><circle cx="95.300" cy="95.300" r="95" fill="#c43a43"/><path d="M75 13h41l-5 130.500H80z" fill="#fff"/><circle cx="95.300" cy="166.300" r="15.500" fill="#fff"/></svg>`;
}

class BrandBadge extends Part {
    static css = `:host { position: absolute; left: 14px; top: 621px; } svg { display: block; }`;
    static html = `<svg width="224" height="76">
        <ellipse cx="116" cy="69" rx="10" ry="4.500" fill="#777"/>
        <path d="M1 36h4v3H1M3 52q-4 2-1 5 3 2 1 5" fill="none" stroke="#666" stroke-width="1.500"/>
        <rect x="5" y="3" width="215" height="67.500" rx="11" fill="#fff" stroke="#000" stroke-width="2"/>
        <path d="M32 23.300h36M91 23.300h38" stroke="#000" stroke-width="2"/>
        <text x="6" y="51.500" font-family="Lato" font-weight="300" font-size="40.500" fill="#000" textLength="118" lengthAdjust="spacingAndGlyphs">Enviro</text>
        <text x="124" y="51.500" font-family="Liberation Sans" font-style="italic" font-size="42" fill="#8cc13c" stroke="#8cc13c" stroke-width=".4" textLength="90" lengthAdjust="spacingAndGlyphs">pass</text>
        <path d="M120 57h84v9h-84z" fill="#fff"/>
        <path d="M122 56.500h81" stroke="#000" stroke-width="2"/>
        <path d="M81 24.500Q70 25 68.500 16q9-.500 12.500 8.500" fill="#7cb83b"/><path d="M81 24.500Q78 10 94.500 9q-1 15-13.500 15.500" fill="#76b82f"/><path d="M81 24.500 91 12M81 24.500l-8-6" fill="none" stroke="#d9efbc" stroke-width=".8"/>
        <text x="206" y="14.500" font-family="Liberation Sans" font-weight="700" font-size="8.500" fill="#000" textLength="9.500" lengthAdjust="spacingAndGlyphs">TM</text>
    </svg>`;
}

class ClickRing extends Part {
    static css = `:host { position: absolute; left: 1px; top: 62px; } svg { display: block; }`;
    static html = `<svg width="56" height="62"><circle cx="22.500" cy="31" r="27.500" fill="none" stroke="#f1f549" stroke-width="4" opacity=".9"/>
        <path d="M21 29.500v14l3-2.800 2.500 5.500 2.500-1-2.500-5.400h4.300z" fill="#fff" stroke="#333" stroke-width="1.100"/></svg>`;
}

// containers come after the small parts they are built from
customElements.define("ui-icon", UiIcon);
customElements.define("ui-text", UiText);
customElements.define("ui-row", UiRow);
customElements.define("ui-col", UiCol);
customElements.define("ui-combo", UiCombo);
customElements.define("rb-big", RbBig);
customElements.define("rb-group", RbGroup);
customElements.define("xl-window", XlWindow);
customElements.define("xl-titlebar", XlTitlebar);
customElements.define("xl-tabs", XlTabs);
customElements.define("xl-ribbon", XlRibbon);
customElements.define("xl-formula", XlFormula);
customElements.define("xl-sheet", XlSheet);
customElements.define("xl-footer", XlFooter);
customElements.define("alert-mark", AlertMark);
customElements.define("brand-badge", BrandBadge);
customElements.define("click-ring", ClickRing);
</script>
</body>
</html>
